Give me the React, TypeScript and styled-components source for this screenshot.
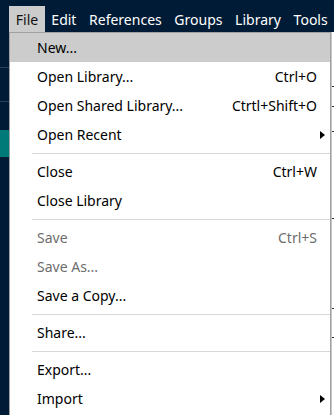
import React from 'react';
import styled, { createGlobalStyle } from 'styled-components';

const Global = createGlobalStyle`
  html, body { margin: 0; padding: 0; }
  body { font-family: "Noto Sans", "Open Sans", sans-serif; }
`;

const Screen = styled.div`
  position: relative;
  width: 334px;
  height: 415px;
  overflow: hidden;
  background: #001b36;
  display: flex;
  flex-direction: column;
`;

const MenuBar = styled.div`
  display: flex;
  height: 32px;
  box-sizing: border-box;
  padding: 6px 0 0 9px;
  flex-shrink: 0;
`;

const MenuTitle = styled.div<{ $open?: boolean }>`
  display: flex;
  align-items: center;
  padding: 0 6.4px;
  min-width: ${p => (p.$open ? '36px' : '0')};
  box-sizing: border-box;
  justify-content: center;
  font-size: 14px;
  white-space: nowrap;
  color: ${p => (p.$open ? '#111' : '#ffffff')};
  background: ${p => (p.$open ? '#cccccc' : 'transparent')};
`;

const Workspace = styled.div`
  flex: 1;
  display: flex;
`;

const Sidebar = styled.div`
  flex: 1;
  display: flex;
  flex-direction: column;
`;

const SideRow = styled.div<{ $h: number; $line?: boolean; $active?: boolean }>`
  height: ${p => p.$h}px;
  flex-shrink: 0;
  box-sizing: border-box;
  border-bottom: ${p => (p.$line ? '1px solid #2a4260' : 'none')};
  background: ${p => (p.$active ? '#007a78' : 'transparent')};
`;

const ContentPane = styled.div`
  width: 3px;
  background: #ffffff;
  display: flex;
  flex-direction: column;
`;

const PaneRow = styled.div<{ $h: number; $line?: boolean }>`
  height: ${p => p.$h}px;
  flex-shrink: 0;
  box-sizing: border-box;
  border-bottom: ${p => (p.$line ? '1px solid #203040' : 'none')};
`;

const Dropdown = styled.div`
  position: absolute;
  left: 9px;
  top: 32px;
  width: 322px;
  bottom: -10px;
  box-sizing: border-box;
  background: #ffffff;
  border: 1px solid #a0a0a0;
  box-shadow: 1px 0 0 #c8c8c8;
  display: flex;
  flex-direction: column;
`;

const Item = styled.div<{ $hover?: boolean; $disabled?: boolean }>`
  height: 29px;
  flex-shrink: 0;
  display: grid;
  grid-template-columns: 1fr auto 8px;
  align-items: center;
  padding: 0 5px 0 27px;
  font-size: 14px;
  color: ${p => (p.$disabled ? '#6d6d6d' : '#000000')};
  background: ${p => (p.$hover ? '#cccccc' : 'transparent')};
  white-space: nowrap;
`;

const Shortcut = styled.span`
  text-align: right;
`;

const ArrowCell = styled.span`
  display: flex;
  justify-content: flex-end;
  align-items: center;
`;

const Arrow = styled.span`
  width: 0;
  height: 0;
  border-left: 5px solid #000;
  border-top: 4.5px solid transparent;
  border-bottom: 4.5px solid transparent;
`;

const Separator = styled.div`
  height: 1px;
  flex-shrink: 0;
  margin: 4px 0 3px 22px;
  background: #d7d7d7;
`;

type Entry =
  | { sep: true }
  | { label: string; shortcut?: string; sub?: boolean; disabled?: boolean; hover?: boolean; sep?: false };

const entries: Entry[] = [
  { label: 'New...', hover: true },
  { label: 'Open Library...', shortcut: 'Ctrl+O' },
  { label: 'Open Shared Library...', shortcut: 'Ctrtl+Shift+O' },
  { label: 'Open Recent', sub: true },
  { sep: true },
  { label: 'Close', shortcut: 'Ctrl+W' },
  { label: 'Close Library' },
  { sep: true },
  { label: 'Save', shortcut: 'Ctrl+S', disabled: true },
  { label: 'Save As...', disabled: true },
  { label: 'Save a Copy...' },
  { sep: true },
  { label: 'Share...' },
  { sep: true },
  { label: 'Export...' },
  { label: 'Import', sub: true },
];

export default function App() {
  return (
    <>
      <Global />
      <Screen>
        <MenuBar>
          <MenuTitle $open>File</MenuTitle>
          <MenuTitle>Edit</MenuTitle>
          <MenuTitle>References</MenuTitle>
          <MenuTitle>Groups</MenuTitle>
          <MenuTitle>Library</MenuTitle>
          <MenuTitle>Tools</MenuTitle>
        </MenuBar>
        <Workspace>
          <Sidebar>
            <SideRow $h={36} $line />
            <SideRow $h={34} $line />
            <SideRow $h={28} />
            <SideRow $h={27} $active />
          </Sidebar>
          <ContentPane>
            <PaneRow $h={55} $line />
            <PaneRow $h={20} $line />
            <PaneRow $h={25} $line />
            <PaneRow $h={87} $line />
            <PaneRow $h={90} $line />
            <PaneRow $h={29} $line />
          </ContentPane>
        </Workspace>
        <Dropdown>
          {entries.map((e, i) =>
            e.sep ? (
              <Separator key={i} />
            ) : (
              <Item key={i} $hover={e.hover} $disabled={e.disabled}>
                <span>{e.label}</span>
                <Shortcut>{e.shortcut ?? ''}</Shortcut>
                <ArrowCell>{e.sub ? <Arrow /> : null}</ArrowCell>
              </Item>
            )
          )}
        </Dropdown>
      </Screen>
    </>
  );
}
